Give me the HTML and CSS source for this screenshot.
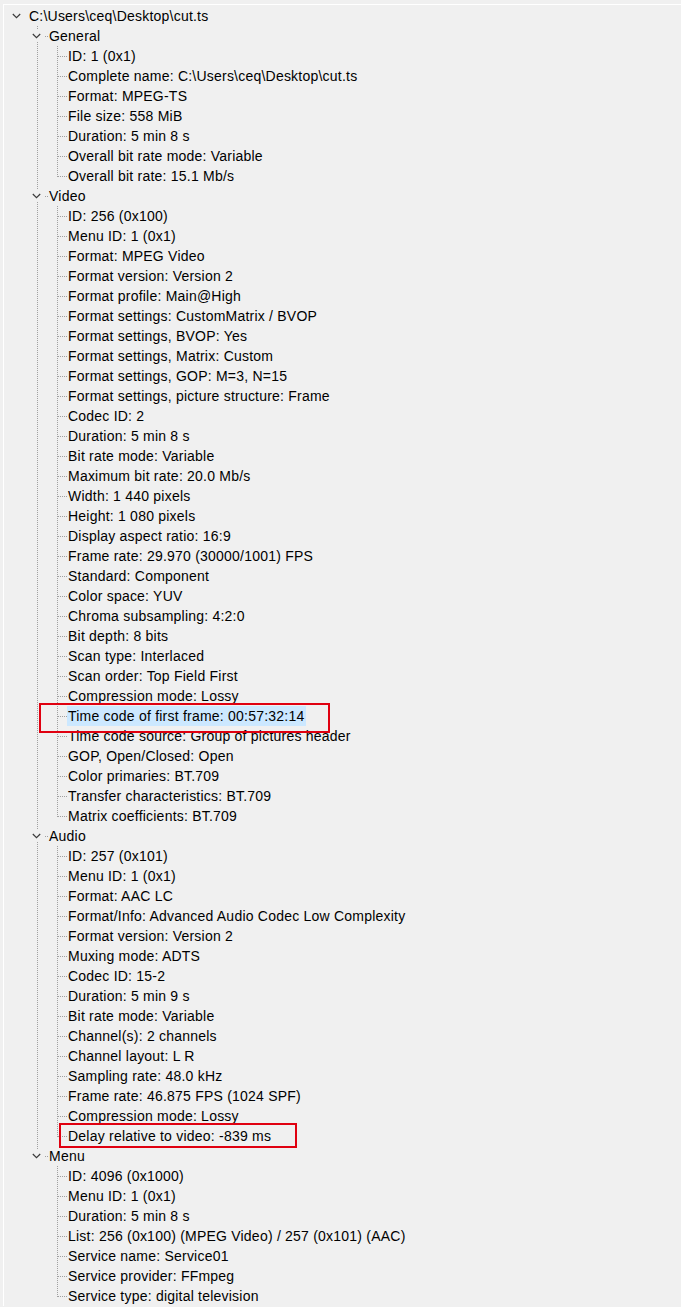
FILE: index.html
```html
<!DOCTYPE html>
<html>
<head>
<meta charset="utf-8">
<link rel="stylesheet" href="styles.css">
</head>
<body>
<div class="frame">
<ul class="tree">
 <li class="node">
  <div class="row hdr"><span class="gutter"><svg class="chev" viewBox="0 0 9 6" width="9" height="6"><polyline points="0.8,1 4.5,4.7 8.2,1"/></svg></span><span class="label">C:\Users\ceq\Desktop\cut.ts</span></div>
  <ul class="kids">
   <li class="node">
    <div class="row hdr"><span class="gutter"><svg class="chev" viewBox="0 0 9 6" width="9" height="6"><polyline points="0.8,1 4.5,4.7 8.2,1"/></svg></span><span class="label">General</span></div>
    <ul class="kids">
     <li><div class="row leaf"><span class="gutter"></span><span class="label">ID: 1 (0x1)</span></div></li>
     <li><div class="row leaf"><span class="gutter"></span><span class="label">Complete name: C:\Users\ceq\Desktop\cut.ts</span></div></li>
     <li><div class="row leaf"><span class="gutter"></span><span class="label">Format: MPEG-TS</span></div></li>
     <li><div class="row leaf"><span class="gutter"></span><span class="label">File size: 558 MiB</span></div></li>
     <li><div class="row leaf"><span class="gutter"></span><span class="label">Duration: 5 min 8 s</span></div></li>
     <li><div class="row leaf"><span class="gutter"></span><span class="label">Overall bit rate mode: Variable</span></div></li>
     <li><div class="row leaf"><span class="gutter"></span><span class="label">Overall bit rate: 15.1 Mb/s</span></div></li>
    </ul>
   </li>
   <li class="node">
    <div class="row hdr"><span class="gutter"><svg class="chev" viewBox="0 0 9 6" width="9" height="6"><polyline points="0.8,1 4.5,4.7 8.2,1"/></svg></span><span class="label">Video</span></div>
    <ul class="kids">
     <li><div class="row leaf"><span class="gutter"></span><span class="label">ID: 256 (0x100)</span></div></li>
     <li><div class="row leaf"><span class="gutter"></span><span class="label">Menu ID: 1 (0x1)</span></div></li>
     <li><div class="row leaf"><span class="gutter"></span><span class="label">Format: MPEG Video</span></div></li>
     <li><div class="row leaf"><span class="gutter"></span><span class="label">Format version: Version 2</span></div></li>
     <li><div class="row leaf"><span class="gutter"></span><span class="label">Format profile: Main@High</span></div></li>
     <li><div class="row leaf"><span class="gutter"></span><span class="label">Format settings: CustomMatrix / BVOP</span></div></li>
     <li><div class="row leaf"><span class="gutter"></span><span class="label">Format settings, BVOP: Yes</span></div></li>
     <li><div class="row leaf"><span class="gutter"></span><span class="label">Format settings, Matrix: Custom</span></div></li>
     <li><div class="row leaf"><span class="gutter"></span><span class="label">Format settings, GOP: M=3, N=15</span></div></li>
     <li><div class="row leaf"><span class="gutter"></span><span class="label">Format settings, picture structure: Frame</span></div></li>
     <li><div class="row leaf"><span class="gutter"></span><span class="label">Codec ID: 2</span></div></li>
     <li><div class="row leaf"><span class="gutter"></span><span class="label">Duration: 5 min 8 s</span></div></li>
     <li><div class="row leaf"><span class="gutter"></span><span class="label">Bit rate mode: Variable</span></div></li>
     <li><div class="row leaf"><span class="gutter"></span><span class="label">Maximum bit rate: 20.0 Mb/s</span></div></li>
     <li><div class="row leaf"><span class="gutter"></span><span class="label">Width: 1 440 pixels</span></div></li>
     <li><div class="row leaf"><span class="gutter"></span><span class="label">Height: 1 080 pixels</span></div></li>
     <li><div class="row leaf"><span class="gutter"></span><span class="label">Display aspect ratio: 16:9</span></div></li>
     <li><div class="row leaf"><span class="gutter"></span><span class="label">Frame rate: 29.970 (30000/1001) FPS</span></div></li>
     <li><div class="row leaf"><span class="gutter"></span><span class="label">Standard: Component</span></div></li>
     <li><div class="row leaf"><span class="gutter"></span><span class="label">Color space: YUV</span></div></li>
     <li><div class="row leaf"><span class="gutter"></span><span class="label">Chroma subsampling: 4:2:0</span></div></li>
     <li><div class="row leaf"><span class="gutter"></span><span class="label">Bit depth: 8 bits</span></div></li>
     <li><div class="row leaf"><span class="gutter"></span><span class="label">Scan type: Interlaced</span></div></li>
     <li><div class="row leaf"><span class="gutter"></span><span class="label">Scan order: Top Field First</span></div></li>
     <li><div class="row leaf"><span class="gutter"></span><span class="label">Compression mode: Lossy</span></div></li>
     <li><div class="row leaf"><span class="gutter"></span><span class="label sel">Time code of first frame: 00:57:32:14</span></div><span class="mark mark-tc"></span></li>
     <li><div class="row leaf"><span class="gutter"></span><span class="label">Time code source: Group of pictures header</span></div></li>
     <li><div class="row leaf"><span class="gutter"></span><span class="label">GOP, Open/Closed: Open</span></div></li>
     <li><div class="row leaf"><span class="gutter"></span><span class="label">Color primaries: BT.709</span></div></li>
     <li><div class="row leaf"><span class="gutter"></span><span class="label">Transfer characteristics: BT.709</span></div></li>
     <li><div class="row leaf"><span class="gutter"></span><span class="label">Matrix coefficients: BT.709</span></div></li>
    </ul>
   </li>
   <li class="node">
    <div class="row hdr"><span class="gutter"><svg class="chev" viewBox="0 0 9 6" width="9" height="6"><polyline points="0.8,1 4.5,4.7 8.2,1"/></svg></span><span class="label">Audio</span></div>
    <ul class="kids">
     <li><div class="row leaf"><span class="gutter"></span><span class="label">ID: 257 (0x101)</span></div></li>
     <li><div class="row leaf"><span class="gutter"></span><span class="label">Menu ID: 1 (0x1)</span></div></li>
     <li><div class="row leaf"><span class="gutter"></span><span class="label">Format: AAC LC</span></div></li>
     <li><div class="row leaf"><span class="gutter"></span><span class="label">Format/Info: Advanced Audio Codec Low Complexity</span></div></li>
     <li><div class="row leaf"><span class="gutter"></span><span class="label">Format version: Version 2</span></div></li>
     <li><div class="row leaf"><span class="gutter"></span><span class="label">Muxing mode: ADTS</span></div></li>
     <li><div class="row leaf"><span class="gutter"></span><span class="label">Codec ID: 15-2</span></div></li>
     <li><div class="row leaf"><span class="gutter"></span><span class="label">Duration: 5 min 9 s</span></div></li>
     <li><div class="row leaf"><span class="gutter"></span><span class="label">Bit rate mode: Variable</span></div></li>
     <li><div class="row leaf"><span class="gutter"></span><span class="label">Channel(s): 2 channels</span></div></li>
     <li><div class="row leaf"><span class="gutter"></span><span class="label">Channel layout: L R</span></div></li>
     <li><div class="row leaf"><span class="gutter"></span><span class="label">Sampling rate: 48.0 kHz</span></div></li>
     <li><div class="row leaf"><span class="gutter"></span><span class="label">Frame rate: 46.875 FPS (1024 SPF)</span></div></li>
     <li><div class="row leaf"><span class="gutter"></span><span class="label">Compression mode: Lossy</span></div></li>
     <li><div class="row leaf"><span class="gutter"></span><span class="label">Delay relative to video: -839 ms</span></div><span class="mark mark-delay"></span></li>
    </ul>
   </li>
   <li class="node">
    <div class="row hdr"><span class="gutter"><svg class="chev" viewBox="0 0 9 6" width="9" height="6"><polyline points="0.8,1 4.5,4.7 8.2,1"/></svg></span><span class="label">Menu</span></div>
    <ul class="kids">
     <li><div class="row leaf"><span class="gutter"></span><span class="label">ID: 4096 (0x1000)</span></div></li>
     <li><div class="row leaf"><span class="gutter"></span><span class="label">Menu ID: 1 (0x1)</span></div></li>
     <li><div class="row leaf"><span class="gutter"></span><span class="label">Duration: 5 min 8 s</span></div></li>
     <li><div class="row leaf"><span class="gutter"></span><span class="label">List: 256 (0x100) (MPEG Video) / 257 (0x101) (AAC)</span></div></li>
     <li><div class="row leaf"><span class="gutter"></span><span class="label">Service name: Service01</span></div></li>
     <li><div class="row leaf"><span class="gutter"></span><span class="label">Service provider: FFmpeg</span></div></li>
     <li><div class="row leaf"><span class="gutter"></span><span class="label">Service type: digital television</span></div></li>
    </ul>
   </li>
  </ul>
 </li>
</ul>
</div>
</body>
</html>
```
FILE: styles.css
```css
html, body {
  margin: 0;
  padding: 0;
  background: #f0f0f0;
}
body {
  font-family: "Liberation Sans", Arial, sans-serif;
  font-size: 14px;
  letter-spacing: 0.22px;
  color: #000;
  overflow: hidden;
  height: 1307px;
}
.frame {
  margin: 4px 0 0 3px;
  border-top: 1px solid #ffffff;
  border-left: 1px solid #ffffff;
  padding-top: 1px;
  height: 1302px;
  box-sizing: border-box;
}
ul {
  list-style: none;
  margin: 0;
  padding: 0;
}
.kids {
  padding-left: 20px;
}
li {
  position: relative;
}
/* vertical sibling connector */
.kids > li::before {
  content: "";
  position: absolute;
  left: 13px;
  top: 0;
  bottom: 0;
  width: 1px;
  background: repeating-linear-gradient(to bottom, #a0a0a0 0 1px, transparent 1px 2px);
  z-index: 0;
}
.kids > li:last-child::before {
  bottom: auto;
  height: 11px;
}
.row {
  display: flex;
  align-items: center;
  height: 20px;
  position: relative;
}
.gutter {
  position: relative;
  flex: none;
  width: 20px;
  height: 20px;
  margin-left: 3px;
  display: flex;
  align-items: center;
  justify-content: center;
}
/* horizontal connector */
.gutter::after {
  content: "";
  position: absolute;
  top: 10px;
  height: 1px;
  background: repeating-linear-gradient(to right, #a0a0a0 0 1px, transparent 1px 2px);
  z-index: 0;
}
.hdr .gutter::after {
  left: 10px;
  width: 11px;
}
.leaf .gutter::after {
  left: 11px;
  width: 9px;
}
.tree > li > .row .gutter::after {
  display: none;
}
.chev {
  position: relative;
  z-index: 1;
  background: #f0f0f0;
  padding: 3px 3px;
  margin-left: -1px;
  fill: none;
  stroke: #3a3a3a;
  stroke-width: 1.15;
}
.label {
  line-height: 20px;
  white-space: nowrap;
  padding: 0 2px 0 1px;
}
.hdr .label {
  margin-left: 1px;
}
.leaf .label {
  margin-left: 0;
}
.label.sel {
  background: #cce8ff;
}
.mark {
  position: absolute;
  box-sizing: border-box;
  border: 2px solid #e00010;
  pointer-events: none;
  z-index: 2;
}
.mark-tc {
  left: -5px;
  top: -3px;
  width: 291px;
  height: 30px;
}
.mark-delay {
  left: 15px;
  top: -3px;
  width: 238px;
  height: 25px;
}
```
